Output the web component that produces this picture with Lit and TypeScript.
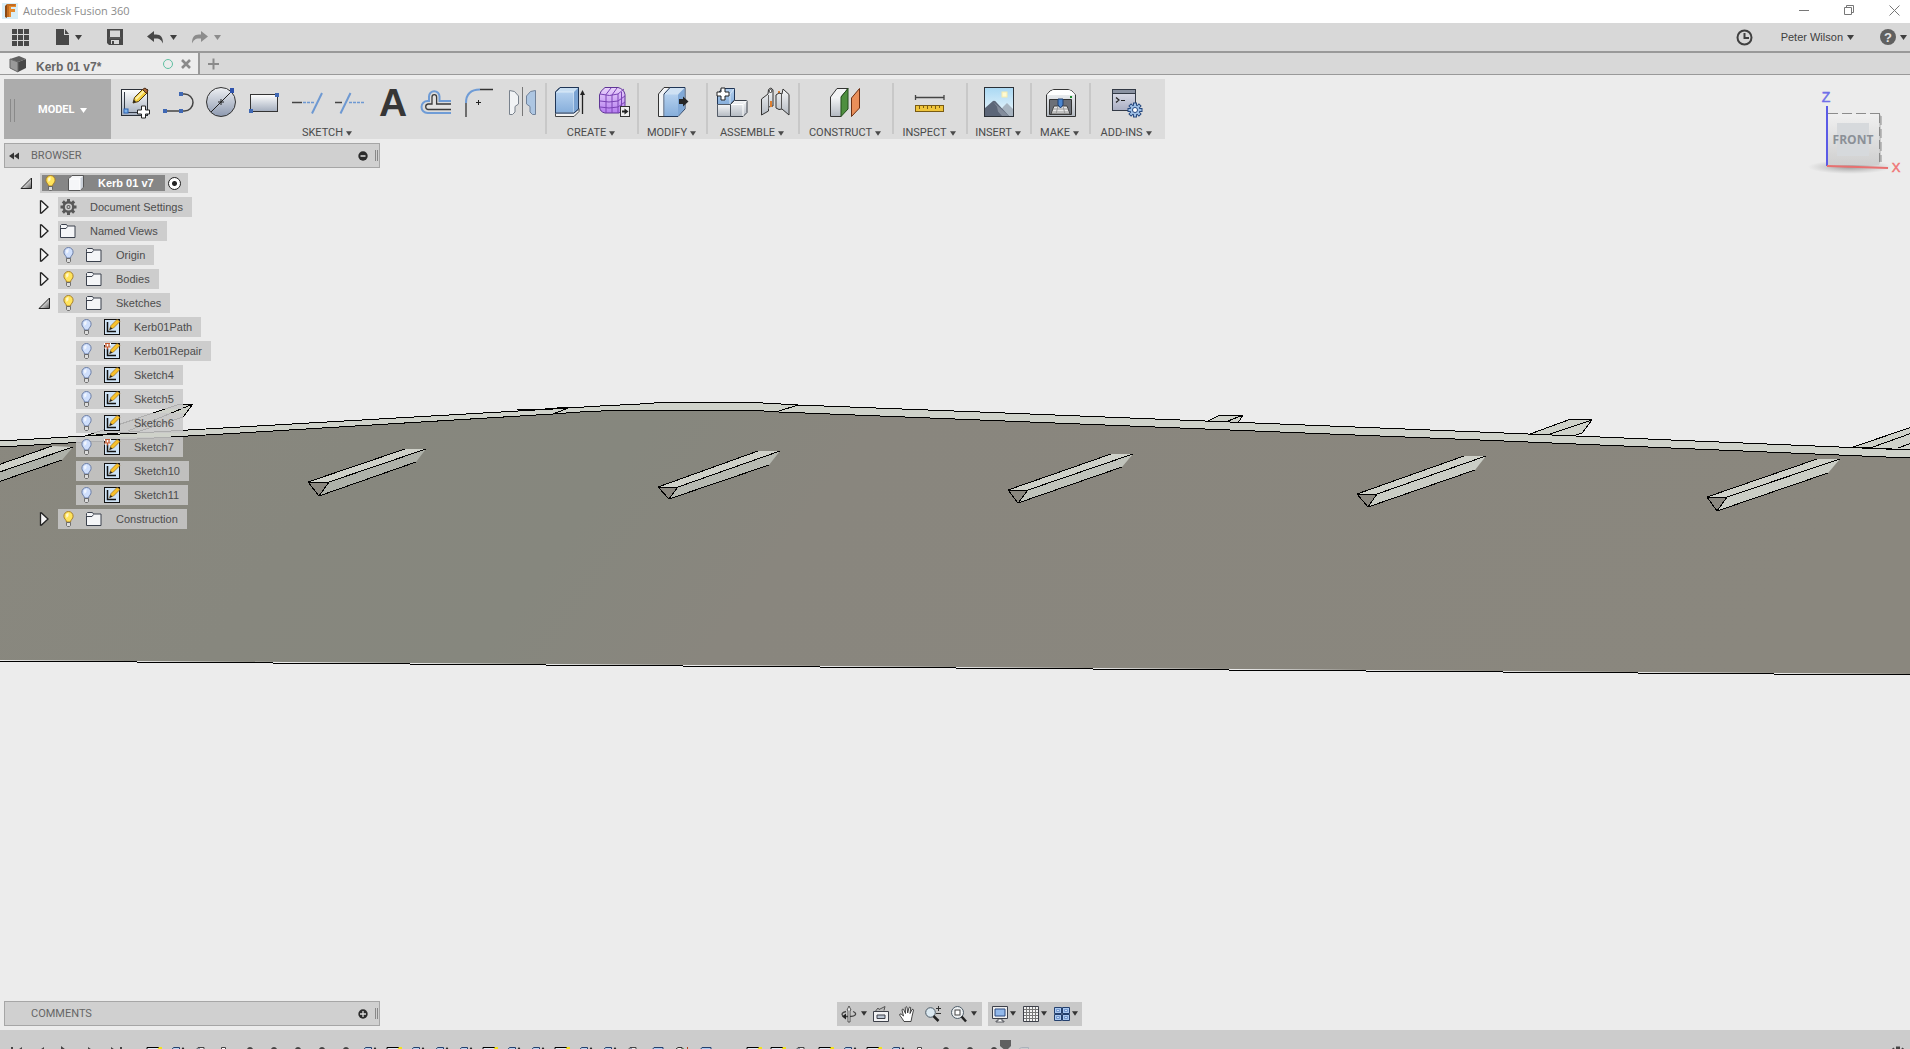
import { LitElement, html, svg, css, nothing, TemplateResult } from "lit";
import { customElement, state } from "lit/decorators.js";

type Pic = TemplateResult;

const icon = (size: number, body: Pic) =>
  html`<svg class="icon" width=${size} height=${size} viewBox="0 0 ${size} ${size}" aria-hidden="true">${body}</svg>`;

const caret = html`<svg class="caret" width="7" height="5" viewBox="0 0 7 5" aria-hidden="true"><path d="M0 0h7L3.5 5z" fill="currentColor" /></svg>`;

const gear = (cx: number, cy: number, r: number, fill: string, stroke: string, hole: string) => svg`
  ${[0, 45, 90, 135].map(a => svg`<rect x=${cx - 1.5} y=${cy - r} width="3" height=${r * 2} fill=${fill} stroke=${stroke} stroke-width="1" transform="rotate(${a} ${cx} ${cy})"/>`)}
  <circle cx=${cx} cy=${cy} r=${r - 2} fill=${fill} stroke=${stroke} />
  ${[0, 45, 90, 135].map(a => svg`<rect x=${cx - 1} y=${cy - r + 1} width="2" height=${r * 2 - 2} fill=${fill} transform="rotate(${a} ${cx} ${cy})"/>`)}
  <circle cx=${cx} cy=${cy} r=${r * 0.36} fill=${hole} stroke=${stroke} />`;

/* 32px ribbon icons */
const ribbon: Record<string, Pic> = {
  createSketch: svg`
    <rect x="2.5" y="3.5" width="26" height="26" fill="url(#steel)" stroke="#2b3038"/>
    <path d="M5.5 6v20.5H19" fill="none" stroke="#333a46"/>
    <rect x="5" y="23" width="4" height="4" fill="#7fb4ea" stroke="#2a62b5"/>
    <path d="M14 17l1.5-5.5L24 3l4.500 3.500-9 9z" fill="#f3cf3d" stroke="#4a3413"/>
    <path d="M16 12.5l9-9 1.500 1.500-9 9z" fill="#fdf0a6"/>
    <path d="M23.5 3.5L26 2l3 2.500-1.500 3z" fill="#a8683c" stroke="#4a2a13"/>
    <path d="M14 17l1-3 2 1.500z" fill="#222"/>
    <path d="M22.5 20h4v4h4v4h-4v4h-4v-4h-4v-4h4z" fill="#fff" stroke="#222"/>`,
  line: svg`
    <path d="M19 8h3.500a8.500 8.500 0 0 1 0 17H3" fill="none" stroke="#444" stroke-width="1.5"/>
    <path d="M17 6h4v4h-4zM1 23h4v4H1zM17 23h4v4h-4z" fill="#3f68b4"/>`,
  circle: svg`
    <circle cx="16" cy="16" r="14.5" fill="url(#steelDeep)" stroke="#333" />
    <path d="M6 26L27 5" stroke="#222"/><path d="M13 16h6M16 13v6" stroke="#222"/>
    <path d="M25 2h4v5h-4z" fill="#2f53ac"/>`,
  rect: svg`
    <rect x="2.5" y="8.5" width="27" height="17" fill="url(#steel)" stroke="#333"/>
    <path d="M27 7h4v4h-4zM1 23h4v4H1z" fill="#3f68b4"/>`,
  trim: svg`
    <path d="M1 16.5h10" stroke="#444" stroke-width="1.5"/>
    <path d="M12 16.5h12" stroke="#6e99d2" stroke-width="1.5" stroke-dasharray="3 1"/>
    <path d="M21 27.5L31 7" stroke="#6e99d2" stroke-width="2"/>`,
  extend: svg`
    <path d="M1 16.5h7" stroke="#444" stroke-width="1.5"/>
    <path d="M15 16.5h16" stroke="#6e99d2" stroke-width="1.5" stroke-dasharray="3 1"/>
    <path d="M6.5 27.5L16.5 7" stroke="#6e99d2" stroke-width="2"/>`,
  text: svg`<text x="16" y="30" text-anchor="middle" font-family="Liberation Sans, Arial, sans-serif" font-weight="700" font-size="39" fill="#363636">A</text>`,
  offset: svg`
    <path d="M31 27H7.5a6 6 0 0 1 0-12H9v-4.500a5.200 5.200 0 0 1 10.500 0V15H31" fill="none" stroke="#6f9cd6" stroke-width="2"/>
    <path d="M31 23.5H8a2.800 2.800 0 0 1 0-5.500h4v-7a2.300 2.300 0 0 1 4.600 0v7H31" fill="#e2e2e2" stroke="#3a3a3a" stroke-width="1.3"/>`,
  fillet: svg`
    <path d="M3 17C3 8 8 3.500 17 3.500" fill="none" stroke="#6f9cd6" stroke-width="2"/>
    <path d="M17 3.500h13M3 17v14" stroke="#333" stroke-width="1.3"/>
    <path d="M13 16.5h5M15.5 14v5" stroke="#222"/>`,
  mirror: svg`
    <path d="M3.5 4.500l5 1 4 4.500v8l-3.500 2.500v5.500l-2.500 2.500h-3z" fill="#f1f3f5" stroke="#78818c"/>
    <path d="M29.5 4.500l-5 1-4 4.500v8l3.500 2.500v5.500l2.500 2.500h3z" fill="#adc6e2" stroke="#71829a"/>
    <path d="M16.5 1v29" stroke="#777"/>`,
  extrude: svg`
    <path d="M.5 26V30.500H19l5-5v-3z" fill="#f3f3f3" stroke="#444"/>
    <path d="M.5 6L5 1.500h18.500V23L19 27H.5z" fill="#c8def2" stroke="#1f3556"/>
    <path d="M.5 6H19v21H.5z" fill="url(#blue)" stroke="#dcebf8"/>
    <path d="M19 6l4.500-4.500V23L19 27z" fill="#7aa3d3"/>
    <path d="M.5 6L5 1.500h18.500V23L19 27H.5z" fill="none" stroke="#1f3556"/>
    <path d="M27.5 28V7" stroke="#222" stroke-width="1.3"/><path d="M25 9l2.500-5L30 9z" fill="#222"/>`,
  form: svg`
    <path d="M1.5 9Q2 5 7 1.500h13q6 1.500 7 7v11q-1 5-6 7.500H7q-5-1-5.500-6z" fill="url(#purple)" stroke="#5f3596"/>
    <path d="M2 8q10 3 18 0l6-5M20 8v19M8 8.500V27M14 9v18M2 15q9 2 18 0l7-5M2 21q9 2 18 0l7-5M8 8.500L13 2M14 9l5-7M23.500 6v18" fill="none" stroke="#7a43b5"/>
    <rect x="22.5" y="20.5" width="9" height="10" fill="#eee" stroke="#333"/>
    <path d="M24 25.500h3" stroke="#222" stroke-width="2"/><path d="M26.5 22.5l4 3-4 3z" fill="#222"/>`,
  modify: svg`
    <path d="M1.5 8L7 1.500h7L8 8v22.500H1.500z" fill="#f2f4f6" stroke="#333"/>
    <path d="M7 8l6-6.500h15V23l-7 7.500H7z" fill="#cfe1f3" stroke="#1f3556"/>
    <path d="M7.5 8.500H21V30H7.500z" fill="url(#blue)"/>
    <path d="M21 8.500l6.500-6.500v21L21 30z" fill="#80a8d6"/>
    <path d="M22 13h4v-2.500l5.500 5-5.500 5V18h-4z" fill="#262626"/>`,
  component: svg`
    <path d="M1.5 8L6 2.500h12.500V14L14 18.500H1.500z" fill="url(#blue)" stroke="#1f3556"/>
    <path d="M14 18V8l4-5M2 8h12" fill="none" stroke="#d6e6f6"/>
    <path d="M1.5 18.500h13v12h-13z" fill="url(#silver)" stroke="#555d68"/>
    <path d="M14.5 18.500l4-4h12.500v12l-4 4H14.500z" fill="url(#silver)" stroke="#3d434c"/>
    <path d="M27 30V18.500l4-4M15 18.500h12" fill="none" stroke="#fff"/>
    <path d="M5 2h4v4h4v4H9v4H5v-4H1V6h4z" fill="#fff" stroke="#222"/>`,
  joint: svg`
    <path d="M2.5 29V13L9 8l.5-4.500Q12 .5 14 4v16l-4.500 1v4z" fill="url(#silver)" stroke="#333"/>
    <circle cx="11.5" cy="5" r="1.5" fill="#fff" stroke="#333"/>
    <path d="M9.500 9v14" stroke="#666"/>
    <path d="M12 15v6M20 5v7" stroke="#e08030" stroke-width="2"/>
    <path d="M17 9l3-2 3 1 1-5 6 5.500V29l-7-6-3 .5-3-1.500z" fill="url(#silver)" stroke="#333"/>
    <path d="M22.500 8v15" stroke="#555"/>`,
  plane: svg`
    <path d="M.5 11L7 2.500h11L11 11v19.500H.5z" fill="#f3f4f5" stroke="#333"/>
    <path d="M1 11h10v19H1z" fill="url(#silver)"/>
    <path d="M11 11l7-8.500V23l-7 7.500z" fill="#4e8f3f" stroke="#234d1b"/>
    <path d="M21.5 12l8-9.500V22l-8 8.500z" fill="#e98f5a" stroke="#6d2f12"/>`,
  measure: svg`
    <path d="M1.5 9v5M30 9v5M1.500 11.500H30" stroke="#444" fill="none" stroke-width="1.3"/>
    <rect x="1.5" y="19.5" width="28" height="6" fill="#efc53b" stroke="#7a5b12"/>
    <path d="M5.5 20v3M9.500 20v2M13.500 20v3M17.500 20v2M21.500 20v3M25.500 20v2" stroke="#7a5b12"/>`,
  picture: svg`
    <rect x="1.5" y="1.5" width="29" height="29" fill="url(#sky)" stroke="#2a2f36"/>
    <rect x="19" y="6" width="5" height="5" fill="#fffbd2" stroke="#f5ecb0"/>
    <path d="M14 30l6-9 4-4 6 6v7z" fill="#a7b4c0"/>
    <path d="M2 30v-8l8-7q2-1 4 2l12 13z" fill="#5c6678"/>
    <path d="M10 15.500l4 5 1 5 4 4.500h7z" fill="#848d9c"/>`,
  printer: svg`
    <path d="M1.5 9Q5 3.500 9 3.500h14q4 0 7.500 5.500V30.500h-29z" fill="url(#silver)" stroke="#333"/>
    <path d="M2 9q4-5 7-5h14q4 0 7 5z" fill="#fff"/>
    <path d="M4.5 13.500h22v15h-22z" fill="#6c7078" stroke="#333"/>
    <path d="M9 20h13l3 8H6z" fill="#e8e8e8" stroke="#444"/><path d="M8 23h15M7 26h17M13 20l-2 8M18 20l2 8" stroke="#999"/>
    <path d="M13 13h5v6l-2.500 3-2.500-3z" fill="#4b86cf" stroke="#1f3f70"/>
    <rect x="25" y="10" width="2" height="2" fill="#1c8a2c"/>`,
  script: svg`
    <rect x="1.5" y="3.5" width="23" height="21" fill="url(#lilac)" stroke="#333a46"/>
    <rect x="2" y="4" width="22" height="3" fill="#8a92a2"/><path d="M2 7.500h22" stroke="#333a46"/>
    <path d="M5 11.500l3 2.500-3 2.500M10 14.500h4" fill="none" stroke="#222" stroke-width="1.2"/>
    ${gear(24, 24, 7, "#9dbfe6", "#27497f", "#fff")}`,
};

/* 16px tree icons */
const bulb = (on: boolean) => icon(16, svg`
  <path d="M8.5 .5a4.600 4.600 0 0 0-4.600 4.700C3.900 8 6.300 8.500 6.500 11h4c.2-2.500 2.600-3 2.600-5.800A4.600 4.600 0 0 0 8.500 .5z" fill=${on ? "#ffe45c" : "#cfdffc"} stroke=${on ? "#a87f2a" : "#6a7da6"}/>
  <path d="M6 3.500Q7 2 8.500 2v3l-2 2z" fill="#fff" opacity=".7"/>
  <path d="M6.500 11.500h4v3l-1 1h-2l-1-1z" fill="#ddd" stroke="#555" stroke-width=".8"/>`);
const folder = icon(16, svg`
  <path d="M.5 4.500V2.500l1-1h5l1 1.500h7.500v11.500H.5z" fill="#f4f5f7" stroke="#3a404c"/>
  <path d="M1 5.500h5l1.500-2M1 14.500h14" fill="none" stroke="#3a404c"/>`);
const cube = icon(16, svg`
  <path d="M.5 4L4 .5h11.500V12L12 15.500H.5z" fill="#f5f6f8" stroke="#555"/><path d="M12 4l3-3v11l-3 3z" fill="#c9cfd8"/><path d="M1 4h11v11" fill="none" stroke="#fff"/>`);
const sketchIcon = (pinned: boolean) => icon(16, svg`
  <rect x=".5" y=".5" width="15" height="15" fill="#cfe3f5" stroke="#111"/>
  <path d="M3.5 3v9.500H12" fill="none" stroke="#111" stroke-width="1.5"/>
  <path d="M5.500 10.500l1.500-4L13 .5l3 2-6.500 6.500z" fill="#f9c22a" stroke="#8a5d12" stroke-width=".6"/><path d="M5.500 11l1-3 2 1.500z" fill="#222"/>
  ${pinned ? svg`<path d="M0 0h7v2H5l2 3.500H0L2 2H0z" fill="#fff"/><path d="M1 .5h5M2 1v2.500M5 1v2.500M.5 4h6M3.500 4v2.500" stroke="#c4552a" stroke-width="1.2"/>` : nothing}`);
const gearIcon = icon(16, svg`
  ${[0, 45, 90, 135].map(a => svg`<rect x="7" y="0" width="3" height="16" fill="#585858" transform="rotate(${a} 8.5 8)"/>`)}
  <circle cx="8.5" cy="8" r="6" fill="#585858"/><circle cx="8.5" cy="8" r="3.6" fill="#cdcdcd"/><circle cx="8.5" cy="8" r="2" fill="#585858"/><circle cx="8.5" cy="8" r="1" fill="#cdcdcd"/>`);

/* 16px navigation icons */
const nav: Record<string, Pic> = {
  orbit: svg`<path d="M12 5.500c4 1.500 4 5-4 5H4" fill="none" stroke="#444" stroke-width="1.3"/><path d="M5 5.500c-4 1-5 2.500-3 4.500" fill="none" stroke="#444" stroke-width="1.3"/><path d="M1 10.500l4-3v6z" fill="#222"/><path d="M7 16V4.500L6 4l2-4 2 4-1 .5V16z" fill="#eee" stroke="#333" stroke-width=".8"/>`,
  look: svg`<path d="M1 7l4-5 1 1.500L12 .5l-1 4" fill="#bbb" stroke="#555"/><path d="M.5 5.500h15v10H.5z" fill="#f2f2f4" stroke="#3c3f48"/><path d="M4 9h8v3.500H4z" fill="#bcc6d4" stroke="#3c3f48"/>`,
  pan: svg`<path d="M5 15.500Q3 12 .6 9q0-1.500 1.500-1L4.500 10 3 4q.3-1.500 1.500-.7L6.500 7.500 6.300 1.500Q7 0 8 1.300L8.700 7 10 1.600q1-1.200 1.700 0L11 7.500l2-4q1.200-.8 1.500.5L13 10.500 12 15.500z" fill="#fff" stroke="#333" stroke-width=".9"/>`,
  zoom: svg`<circle cx="5.5" cy="6.5" r="4.8" fill="#dbe8f0" stroke="#4b5a66"/><path d="M8.500 10l5 5" stroke="#222" stroke-width="2.5"/><path d="M13.500 0v5M11 2.500h5M11 7.500h5" stroke="#333"/>`,
  fit: svg`<circle cx="6.5" cy="6.5" r="6" fill="#eef1f3" stroke="#4b5a66"/><rect x="4" y="4" width="5" height="5" fill="#fff" stroke="#444"/><path d="M10.500 10.500l4.500 5" stroke="#222" stroke-width="2.500"/>`,
  display: svg`<path d="M.5.5h15v12H.5z" fill="#eee" stroke="#3c3f48"/><path d="M3 3h10v7H3z" fill="#92b8ea" stroke="#2c4a80"/><path d="M6 13h4v2h2v1H4v-1h2z" fill="#fff" stroke="#3c3f48" stroke-width=".8"/>`,
  grid: svg`<path d="M.5.5h15v15H.5z" fill="#f4f4f4" stroke="#3c3f48"/><path d="M3.500 1v14M6.500 1v14M9.500 1v14M12.500 1v14M1 3.500h14M1 6.500h14M1 9.500h14M1 12.500h14" stroke="#777"/>`,
  panes: svg`<path d="M.5 1.500h7v6h-7zM8.500 1.500h7v6h-7zM.5 8.500h7v6h-7zM8.500 8.500h7v6h-7z" fill="#a9c8f0" stroke="#24406e"/><path d="M2.500 3.500h3v2h-3zM10.500 3.500h3v2h-3zM2.500 10.500h3v2h-3zM10.500 10.500h3v2h-3z" fill="#c9ddf6" stroke="#5f86c2" stroke-width=".8"/>`,
};

/* 16px timeline features */
const feature: Record<string, Pic> = {
  sketch: svg`<path d="M1 .5h13v14H1z" fill="#dfe9f5" stroke="#000"/><path d="M11 3l2-3h3v3z" fill="#f4e21c"/>`,
  extrude: svg`<path d="M1.500 3l2-2.500h6V14h-8z" fill="#b9d2ee" stroke="#24406e"/><path d="M11 3l2-3 2 3z" fill="#222"/><path d="M13 2v12" stroke="#222"/>`,
  pattern: svg`<path d="M2 3l2-2.500h6V14H2z" fill="#eee" stroke="#444"/><path d="M5 1v13" stroke="#24406e"/>`,
  plane: svg`<path d="M3.500 .5h4V14h-4z" fill="#fff" stroke="#444"/>`,
  dot: svg`<path d="M5 2q1-2 3-2t3 2v8H5z" fill="#444"/>`,
  body: svg`<path d="M2 3l2-2.500h9V14H2z" fill="#a9c8f0" stroke="#24406e"/>`,
  mirror: svg`<path d="M2 2l2-1.500h4V14H2z" fill="#eee" stroke="#333"/><path d="M9 1v12" stroke="#2c7a2c"/><path d="M13.500 0v13" stroke="#b5421c"/>`,
  none: svg``,
};

const timeline = ("sketch extrude pattern plane dot dot dot dot dot extrude sketch extrude extrude extrude sketch extrude extrude " +
  "sketch extrude extrude pattern body mirror body none sketch sketch pattern sketch extrude sketch extrude plane dot dot dot").split(" ");

interface Group { label: string; tools: [string, string][]; }
const groups: Group[] = [
  { label: "SKETCH", tools: [["createSketch", "Create sketch"], ["line", "Line"], ["circle", "Circle"], ["rect", "Rectangle"], ["trim", "Trim"], ["extend", "Extend"], ["text", "Text"], ["offset", "Offset"], ["fillet", "Fillet"], ["mirror", "Mirror"]] },
  { label: "CREATE", tools: [["extrude", "Extrude"], ["form", "Create form"]] },
  { label: "MODIFY", tools: [["modify", "Press pull"]] },
  { label: "ASSEMBLE", tools: [["component", "New component"], ["joint", "Joint"]] },
  { label: "CONSTRUCT", tools: [["plane", "Offset plane"]] },
  { label: "INSPECT", tools: [["measure", "Measure"]] },
  { label: "INSERT", tools: [["picture", "Attached canvas"]] },
  { label: "MAKE", tools: [["printer", "3D print"]] },
  { label: "ADD-INS", tools: [["script", "Scripts and add-ins"]] },
];

interface Row { label: string; depth: number; bulb?: boolean; kind: "settings" | "folder" | "sketch" | "pinned"; open?: boolean; }
const rows: Row[] = [
  { label: "Document Settings", depth: 1, kind: "settings", open: false },
  { label: "Named Views", depth: 1, kind: "folder", open: false },
  { label: "Origin", depth: 1, kind: "folder", bulb: false, open: false },
  { label: "Bodies", depth: 1, kind: "folder", bulb: true, open: false },
  { label: "Sketches", depth: 1, kind: "folder", bulb: true, open: true },
  { label: "Kerb01Path", depth: 2, kind: "sketch", bulb: false },
  { label: "Kerb01Repair", depth: 2, kind: "pinned", bulb: false },
  { label: "Sketch4", depth: 2, kind: "sketch", bulb: false },
  { label: "Sketch5", depth: 2, kind: "sketch", bulb: false },
  { label: "Sketch6", depth: 2, kind: "sketch", bulb: false },
  { label: "Sketch7", depth: 2, kind: "pinned", bulb: false },
  { label: "Sketch10", depth: 2, kind: "sketch", bulb: false },
  { label: "Sketch11", depth: 2, kind: "sketch", bulb: false },
  { label: "Construction", depth: 1, kind: "folder", bulb: true, open: false },
];

/* Each rib: front triangle a b c, then the far ends d e f of its three edges. */
type Pt = [number, number];
const ribs: Pt[][] = [
  [[-42, 479], [-21, 479], [-31, 492], [52, 446], [73, 447], [62, 460]],
  [[308, 482], [329, 482], [319, 496], [405, 449], [426, 449], [416, 462]],
  [[658, 487], [678, 487], [669, 499], [758, 451], [780, 451], [769, 465]],
  [[1008, 490], [1028, 490], [1018, 503], [1111, 454], [1133, 454], [1122, 467]],
  [[1357, 494], [1377, 494], [1368, 507], [1464, 456], [1486, 456], [1475, 470]],
  [[1707, 497], [1727, 497], [1717, 511], [1817, 459], [1840, 459], [1828, 473]],
];
const pts = (...p: Pt[]) => p.map(q => q.join(",")).join(" ");

const upperEdge = "0,441 240,427 553,409 600,406 640,404 668,402 746,402 798,405 980,412 1480,432 1910,450";
const lowerEdge = "0,447 240,433 553,414 580,412 623,410 748,410 779,412 830,414 980,420 1480,440 1910,458";
const reversed = (s: string) => s.split(" ").reverse().join(" ");

const scene = html`
  <svg class="scene" viewBox="0 75 1910 955" preserveAspectRatio="xMidYMid slice" role="img" aria-label="Kerb model">
    <g fill="#cfd2ca" stroke="#000" shape-rendering="crispEdges">
      <polygon points="85,436 180,404 193,404 183,417 140,431" />
      <polyline points="128,431 193,404" fill="none" />
      <polygon points="1208,421 1220,415 1243,415 1238,423" />
      <polyline points="1228,421 1243,415" fill="none" />
      <polygon points="1530,434 1571,419 1592,420 1582,433 1573,436" />
      <polyline points="1550,434 1592,420" fill="none" />
      <polygon points="1853,447 1912,427 1912,450" />
      <polyline points="1873,447 1912,433" fill="none" />
      <polyline points="1898,448 1912,443" fill="none" />
    </g>
    <polygon points="${lowerEdge} 1910,674 0,660" fill="url(#slab)" />
    <polygon points="${upperEdge} ${reversed(lowerEdge)}" fill="#cfd2ca" />
    <g fill="none" stroke="#000" shape-rendering="crispEdges">
      <polyline points=${upperEdge} />
      <polyline points="517,409 545,409 570,407" />
      <polyline points=${lowerEdge} />
      <polyline points="0,661 1910,675" />
      <polyline points="553,414 571,407" />
      <polyline points="779,411 798,405" />
    </g>
    ${ribs.map(([a, b, c, d, e, f], i) => svg`
      <polygon points=${pts(a, d, e, b)} fill="#cfd1c9"/>
      <polygon points=${pts(b, e, f, c)} fill=${i < 2 ? "#aeb1a9" : i === 2 ? "#b6b9b1" : i === 3 ? "#c0c3bb" : "#cacdc5"}/>
      <polygon points=${pts(a, b, c)} fill="#8a877f"/>
      <g fill="none" stroke="#000" shape-rendering="crispEdges">
        <polyline points=${pts(d, a, b, e)}/><polyline points=${pts(a, c, f)}/><polyline points=${pts(b, c)}/>
      </g>`)}
  </svg>`;

const defs = html`
  <svg class="defs" width="0" height="0" aria-hidden="true">
    <defs>
      <linearGradient id="steel" x2="0" y2="1"><stop stop-color="#fff" /><stop offset="1" stop-color="#a3adbd" /></linearGradient>
      <linearGradient id="steelDeep" x2="0" y2="1"><stop stop-color="#eef0f3" /><stop offset="1" stop-color="#8d99b0" /></linearGradient>
      <linearGradient id="silver" x2="0" y2="1"><stop stop-color="#f6f7f8" /><stop offset="1" stop-color="#b4bac2" /></linearGradient>
      <linearGradient id="lilac" x2="0" y2="1"><stop stop-color="#e2e4ee" /><stop offset="1" stop-color="#a9adc2" /></linearGradient>
      <linearGradient id="blue" x2="0" y2="1"><stop stop-color="#b4d0ee" /><stop offset="1" stop-color="#86aedb" /></linearGradient>
      <linearGradient id="purple" x2="0" y2="1"><stop stop-color="#e9d4fb" /><stop offset="1" stop-color="#b57cf0" /></linearGradient>
      <linearGradient id="sky" x2="0" y2="1"><stop stop-color="#a9d8f3" /><stop offset="1" stop-color="#eef8fd" /></linearGradient>
      <linearGradient id="cubeFace" x2="0" y2="1"><stop stop-color="#f0f0f0" /><stop offset="1" stop-color="#cfcfcf" /></linearGradient>
      <linearGradient id="fold" x1="0" y1="0" x2="1" y2="1"><stop offset=".4" stop-color="#eee" /><stop offset="1" stop-color="#555" /></linearGradient>
      <radialGradient id="shade"><stop stop-color="#777" stop-opacity=".7" /><stop offset="1" stop-color="#999" stop-opacity="0" /></radialGradient>
      <linearGradient id="slab" x1="0" y1="0" x2="1" y2=".1">
        <stop stop-color="#8a887f" /><stop offset=".2" stop-color="#87877e" /><stop offset=".34" stop-color="#86877e" /><stop offset=".46" stop-color="#89867e" /><stop offset="1" stop-color="#8a877e" />
      </linearGradient>
    </defs>
  </svg>`;

@customElement("app-root")
export class AppRoot extends LitElement {
  @state() private sketchesOpen = true;

  static styles = css`
    :host { display: flex; flex-direction: column; height: 100vh; overflow: hidden; background: #ececec; color: #4a4a4a; font: 11px/14px "Liberation Sans", Arial, sans-serif; }
    *, *::before { box-sizing: border-box; }
    button { margin: 0; padding: 0; border: 0; background: none; color: inherit; font: inherit; display: flex; align-items: center; cursor: pointer; }
    .icon, .caret { display: block; flex: none; overflow: visible; }
    .defs { position: absolute; }
    .spacer { flex: 1; }

    .title { display: flex; align-items: center; height: 23px; flex: none; padding: 0 10px 1px 2px; gap: 5px; background: #fff; color: #8c8c8c; font: 11px/16px "Open Sans", "Noto Sans", sans-serif; }
    .title h1 { margin: 0; font: inherit; }
    .window { display: flex; gap: 34px; align-self: flex-start; padding-top: 5px; }

    .quick { display: flex; align-items: center; height: 30px; flex: none; padding: 0 3px 0 12px; border-bottom: 2px solid #999; background: #d8d8d8; color: #404040; }
    .quick button { gap: 6px; }
    .quick .apps { margin-right: 27px; }
    .quick .file { margin-right: 25px; gap: 5px; }
    .quick .save { margin-right: 24px; }
    .quick .undo { margin-right: 14px; }
    .quick .redo { color: #8c8c8c; }
    .quick .clock { margin-right: 28px; }
    .quick .user { margin-right: 26px; gap: 4px; }
    .quick .help { gap: 4px; }

    .tabs { display: flex; height: 22px; flex: none; background: #d8d8d8; border-bottom: 1px solid #999; }
    .tab { display: flex; align-items: center; width: 200px; padding: 0 7px 0 10px; border-right: 2px solid #999; background: #ececec; }
    .tab a { flex: 1; padding: 6px 0 0 10px; color: #666; font-size: 12px; font-weight: 700; text-decoration: none; }
    .tab .ring { width: 10px; height: 10px; margin-right: 8px; border: 1px solid #5fc0a2; border-radius: 50%; }
    .plus { padding-left: 8px; }

    main { position: relative; display: flex; flex-direction: column; align-items: flex-start; flex: 1; min-height: 0; padding: 4px 0 4px 4px; }
    .scene { position: absolute; inset: 0; width: 100%; height: 100%; }
    .ribbon, .panel, .tree, .dock { position: relative; }

    .caps { font: 11px/14px Roboto, "Liberation Sans", sans-serif; }
    .ribbon { display: flex; height: 60px; flex: none; background: #dcdcdc; }
    .mode { width: 107px; padding: 2px 0 0 6px; background: #acacac; color: #fff; }
    .mode .grip { width: 5px; height: 23px; margin-right: 23px; border: solid #8a8a8a; border-width: 0 1px; }
    .mode b { margin-right: 5px; }
    .groups { display: grid; grid-template-columns: 436px 92px 69px 92px 94px 74px 64px 59px 74px; }
    .group { position: relative; display: flex; flex-direction: column; align-items: center; padding: 7px 2px 0 0; }
    .group + .group::before { content: ""; position: absolute; left: -2px; top: 4px; width: 2px; height: 51px; background: #c8c8c8; }
    .tools { display: flex; gap: 11px; }
    .menu { gap: 3px; margin: 8px 2px 0 0; }
    .menu .caret { width: 6px; }

    .panel { display: flex; align-items: center; width: 376px; height: 25px; flex: none; padding: 0 1px 0 4px; border: 1px solid #a6a6a6; background: #d0d0d0; color: #666; }
    .panel h2 { flex: 1; margin: 0; padding-left: 12px; font-weight: 400; }
    .panel .grip { width: 3px; height: 11px; margin-left: 7px; border: solid #888; border-width: 0 1px; }
    .browser { margin-top: 4px; }
    .blank { width: 10px; }

    .tree { display: flex; flex-direction: column; gap: 4px; margin: 5px 0 0; padding: 0; list-style: none; }
    .row { display: flex; align-items: center; height: 20px; padding-left: 16px; }
    .d1 { padding-left: 34px; }
    .d2 { padding-left: 52px; }
    .twist { width: 12px; height: 14px; margin-right: 8px; }
    .chip { display: flex; align-items: center; height: 20px; padding: 0 9px 0 2px; background: rgba(200, 200, 200, .87); color: #4c4c4c; }
    .chip .first { margin-right: 10px; }
    .chip .name { padding-left: 14px; }
    .root { padding: 0 7px 0 2px; background: #cdcdcd; }
    .root .dark { display: flex; align-items: center; height: 16px; margin-right: 3px; padding: 0 11px 0 0; background: #868686; color: #fff; font-weight: 700; }
    .root input { appearance: none; width: 13px; height: 13px; margin: 0; border: 1px solid #222; border-radius: 50%; background: radial-gradient(circle, #222 0 2px, #fff 3px); }

    .dock { display: grid; grid-template-columns: 1fr auto 1fr; align-items: center; width: 100%; margin-top: auto; }
    .bars { display: flex; gap: 6px; padding-left: 4px; }
    .bar { display: flex; height: 24px; background: #c8c8c8; padding: 0 5px 0 4px; gap: 10px; color: #333; }
    .bar .drop { gap: 4px; margin-right: -4px; }
    .bar .drop:last-child { margin-right: 0; }
    .bar .caret { width: 6px; }
    .views { padding: 0 4px; gap: 7px; }
    .views .drop { gap: 2px; margin-right: 0; }

    .viewcube { position: absolute; top: 12px; right: 5px; }

    .timeline { display: flex; align-items: flex-start; height: 19px; flex: none; padding: 17px 4px 0 7px; overflow: hidden; background: #cccccc; }
    .play { display: flex; gap: 8px; width: 135px; }
    .step { width: 24px; justify-content: center; }
    .marker { margin: -7px 0 0 -7px; }
  `;

  private row(r: Row) {
    const closed = svg`<path d="M2.5 1l1 0 6.500 6-6.500 6-1 0z" fill="#f4f4f4" stroke="#222" stroke-width="1.3"/>`;
    const opened = svg`<path d="M1 12.5L11.5 2v10.500z" fill="url(#fold)" stroke="#222"/>`;
    const kind = r.kind === "settings" ? gearIcon : r.kind === "folder" ? folder : sketchIcon(r.kind === "pinned");
    const open = r.label === "Sketches" ? this.sketchesOpen : r.open;
    return html`<li class="row d${r.depth}">
      ${r.open === undefined
        ? html`<span class="twist"></span>`
        : html`<button class="twist" aria-label="Expand ${r.label}" aria-expanded=${open ? "true" : "false"} @click=${() => r.label === "Sketches" && (this.sketchesOpen = !this.sketchesOpen)}>
            <svg class="icon" width="12" height="14" viewBox="0 0 12 14">${open ? opened : closed}</svg></button>`}
      <div class="chip">
        ${r.bulb === undefined ? nothing : html`<button class="first" aria-label="Show ${r.label}">${bulb(r.bulb)}</button>`}
        ${kind}<span class="name">${r.label}</span>
      </div>
    </li>`;
  }

  private navButton(name: string, label: string, drop = false) {
    return html`<button class=${drop ? "drop" : ""} aria-label=${label}>${icon(16, nav[name])}${drop ? caret : nothing}</button>`;
  }

  render() {
    return html`
      ${defs}
      <header class="title">
        ${icon(16, svg`<rect width="16" height="16" fill="#d8eef8"/><path d="M5 1h9v3H9v2h4v3H9v5H5z" fill="#e58a2e"/><path d="M5 1L3 3v11l2 1z" fill="#8a4a16"/><path d="M5 1h9l-1 2H7v11H5z" fill="#c56d20"/>`)}
        <h1>Autodesk Fusion 360</h1>
        <span class="spacer"></span>
        <div class="window">
          <button aria-label="Minimize">${icon(11, svg`<path d="M0 5.500h10" stroke="#777"/>`)}</button>
          <button aria-label="Restore">${icon(11, svg`<path d="M.5 2.500h7v7h-7zM2.500 2.500v-2h7v7h-2" fill="none" stroke="#777"/>`)}</button>
          <button aria-label="Close">${icon(11, svg`<path d="M.5.5l10 10M10.5.5l-10 10" stroke="#777"/>`)}</button>
        </div>
      </header>

      <nav class="quick">
        <button class="apps" aria-label="Data panel">${icon(17, svg`<path d="M0 0h5v5H0zM6 0h5v5H6zM12 0h5v5h-5zM0 6h5v5H0zM6 6h5v5H6zM12 6h5v5h-5zM0 12h5v5H0zM6 12h5v5H6zM12 12h5v5h-5z" fill="#484848"/>`)}</button>
        <button class="file" aria-label="File"><svg class="icon" width="14" height="16" viewBox="0 0 14 16"><path d="M0 0h8v6h5v10H0zM9 0l4 5H9z" fill="#484848" /></svg>${caret}</button>
        <button class="save" aria-label="Save">${icon(16, svg`<path d="M0 0h16v16H2l-2-2z" fill="#484848"/><path d="M3 1.500h10V8H3zM4 11h8v4H4z" fill="#d8d8d8"/><path d="M5 12h2v3H5z" fill="#484848"/><path d="M2 9h12" stroke="#666"/>`)}</button>
        <button class="undo" aria-label="Undo">${icon(17, svg`<path d="M0 7.500L7 2v3.500h2c5 0 7 3 7 9-1.500-3-3-5-7-5H7V13z" fill="#484848"/>`)}${caret}</button>
        <button class="redo" aria-label="Redo">${icon(17, svg`<path d="M17 7.500L10 2v3.500H8c-5 0-7 3-7 9 1.500-3 3-5 7-5h2V13z" fill="#8c8c8c"/>`)}${caret}</button>
        <span class="spacer"></span>
        <button class="clock" aria-label="Job status">${icon(17, svg`<circle cx="8.5" cy="8.5" r="7" fill="none" stroke="#404040" stroke-width="2"/><path d="M8.500 4v5H13" fill="none" stroke="#404040" stroke-width="2"/>`)}</button>
        <button class="user">Peter Wilson ${caret}</button>
        <button class="help" aria-label="Help">${icon(16, svg`<circle cx="8" cy="8" r="8" fill="#606060"/><text x="8" y="12.5" text-anchor="middle" font-family="Liberation Sans, sans-serif" font-weight="700" font-size="13" fill="#e4e4e4">?</text>`)}${caret}</button>
      </nav>

      <div class="tabs">
        <div class="tab">
          ${icon(16, svg`<path d="M0 3l9-3 7 3-8 3z" fill="#606060"/><path d="M0 3l8 3v10l-8-4z" fill="#9a9a9a"/><path d="M8 6l8-3v9l-8 4z" fill="#484848"/><path d="M0 3l8 3v10l-8-4z" fill="none" stroke="#666"/>`)}
          <a href="#kerb">Kerb 01 v7*</a>
          <span class="ring"></span>
          <button aria-label="Close tab">${icon(10, svg`<path d="M1 1l8 8M9 1L1 9" stroke="#8a8a8a" stroke-width="2.6"/>`)}</button>
        </div>
        <button class="plus" aria-label="New tab">${icon(11, svg`<path d="M0 6h11M5.5.5v11" stroke="#8a8a8a" stroke-width="2"/>`)}</button>
      </div>

      <main>
        ${scene}
        <div class="ribbon caps">
          <button class="mode"><span class="grip"></span><b>MODEL</b>${caret}</button>
          <div class="groups">
            ${groups.map(g => html`<div class="group">
              <div class="tools">${g.tools.map(([id, label]) => html`<button aria-label=${label}>${icon(32, ribbon[id])}</button>`)}</div>
              <button class="menu">${g.label}${caret}</button>
            </div>`)}
          </div>
        </div>

        <section class="panel browser caps">
          <button aria-label="Collapse browser">${icon(10, svg`<path d="M5 1.500v7L0 5zM10 1.500v7L5 5z" fill="#333"/>`)}</button>
          <h2 class="caps">BROWSER</h2>
          <button aria-label="Hide browser">${icon(10, svg`<circle cx="5" cy="5" r="4.7" fill="#2c2c2c"/><path d="M2.500 5h5" stroke="#ddd" stroke-width="1.5"/>`)}</button>
          <span class="grip"></span>
        </section>

        <ul class="tree">
          <li class="row">
            <button class="twist" aria-label="Collapse Kerb 01 v7"><svg class="icon" width="12" height="14" viewBox="0 0 12 14"><path d="M1 12.5L11.5 2v10.500z" fill="url(#fold)" stroke="#222" /></svg></button>
            <div class="chip root">
              <div class="dark"><button class="first" aria-label="Show Kerb 01 v7">${bulb(true)}</button>${cube}<span class="name">Kerb 01 v7</span></div>
              <input type="radio" checked aria-label="Activate Kerb 01 v7" />
            </div>
          </li>
          ${rows.filter(r => r.depth < 2 || this.sketchesOpen).map(r => this.row(r))}
        </ul>

        <div class="dock">
          <section class="panel caps">
            <span class="blank"></span>
            <h2 class="caps">COMMENTS</h2>
            <button aria-label="Add comment">${icon(10, svg`<circle cx="5" cy="5" r="4.7" fill="#2c2c2c"/><path d="M2 5h6M5 2v6" stroke="#ddd" stroke-width="1.3"/>`)}</button>
            <span class="grip"></span>
          </section>
          <div class="bars">
            <div class="bar">
              ${this.navButton("orbit", "Orbit", true)}${this.navButton("look", "Look at")}${this.navButton("pan", "Pan")}${this.navButton("zoom", "Zoom")}${this.navButton("fit", "Fit", true)}
            </div>
            <div class="bar views">
              ${this.navButton("display", "Display settings", true)}${this.navButton("grid", "Grid and snaps", true)}${this.navButton("panes", "Viewports", true)}
            </div>
          </div>
        </div>

        <svg class="viewcube" width="110" height="90" viewBox="1795 87 110 90" role="img" aria-label="View cube, front">
          <ellipse cx="1850" cy="167" rx="42" ry="7" fill="url(#shade)" />
          <rect x="1828" y="114" width="51" height="51" fill="url(#cubeFace)" />
          <path d="M1879 114l2 1v45l-2 5z" fill="#ccc" />
          <rect x="1837" y="123" width="32" height="33" fill="#d6d9dc" />
          <path d="M1828 113.5h52" stroke="#8c8c8c" stroke-dasharray="10 4" />
          <path d="M1879.5 114v51M1881 116v46" stroke="#8c8c8c" stroke-dasharray="9 4" fill="none" />
          <path d="M1827 106v60" stroke="#5b5be6" stroke-width="2" />
          <path d="M1827 166l61 2" stroke="#e87070" stroke-width="2" />
          <text x="1853" y="144" text-anchor="middle" font-family="Open Sans, sans-serif" font-weight="700" font-size="12" fill="#8b9097">FRONT</text>
          <text x="1826" y="102" text-anchor="middle" font-family="Liberation Sans, sans-serif" font-size="14" fill="#6f6fe8" stroke="#6f6fe8" stroke-width=".5">Z</text>
          <text x="1896" y="172" text-anchor="middle" font-family="Liberation Sans, sans-serif" font-size="13" fill="#f07878" stroke="#f07878" stroke-width=".5">X</text>
        </svg>
      </main>

      <footer class="timeline">
        <div class="play">
          <button aria-label="Go to start">${icon(16, svg`<path d="M4 0h2v10H4zM15 0v10L8 5z" fill="#444"/>`)}</button>
          <button aria-label="Step back">${icon(16, svg`<path d="M13 0v10L6 5z" fill="#444"/>`)}</button>
          <button aria-label="Play">${icon(16, svg`<path d="M6-1v13l9-6z" fill="#444"/>`)}</button>
          <button aria-label="Step forward">${icon(16, svg`<path d="M9 0v10l7-5z" fill="#444"/>`)}</button>
          <button aria-label="Go to end">${icon(16, svg`<path d="M8 0v10l7-5zM17 0h2v10h-2z" fill="#444"/>`)}</button>
        </div>
        ${timeline.map(t => html`<button class="step" aria-label="Feature ${t}">${icon(16, feature[t])}</button>`)}
        <button class="marker" aria-label="Timeline marker"><svg class="icon" width="40" height="16" viewBox="0 0 40 16"><path d="M1 0h11v6l-5 5-6-5z" fill="#606060" /><path d="M20.5 12V8.500l2-1h7V12" fill="none" stroke="#aab2bc" /></svg></button>
        <span class="spacer"></span>
        <button aria-label="Timeline settings">${icon(16, gear(8, 8, 8, "#444", "#444", "#ccc"))}</button>
      </footer>`;
  }
}
